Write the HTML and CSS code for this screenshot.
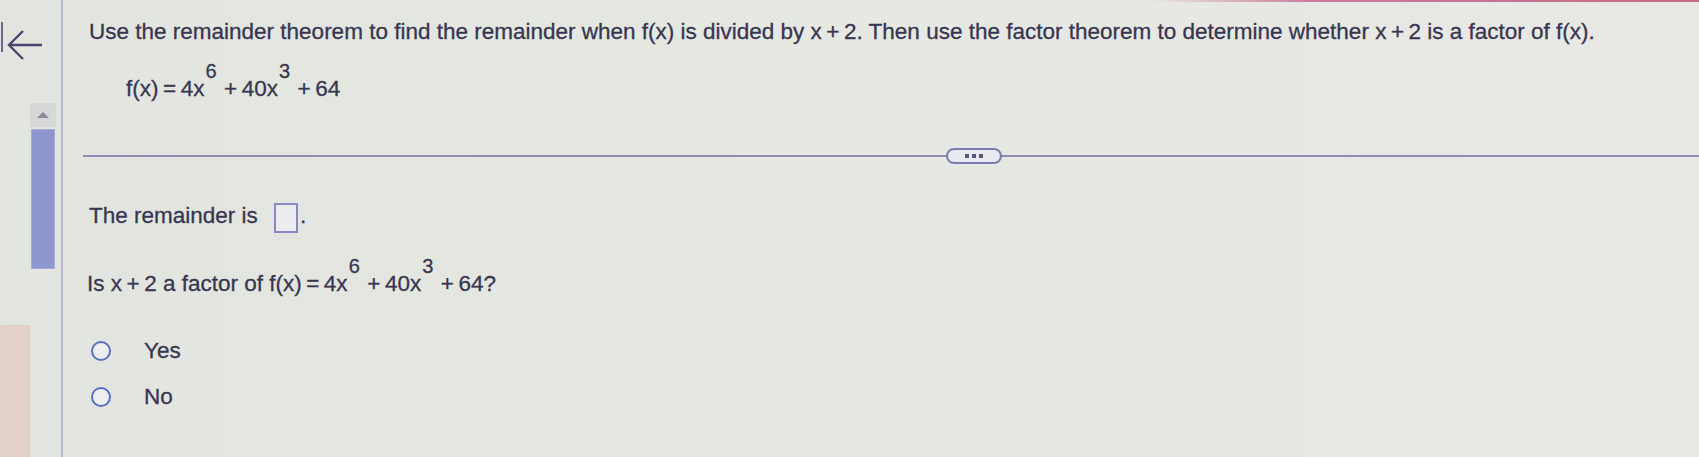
FILE: index.html
```html
<!DOCTYPE html>
<html>
<head>
<meta charset="utf-8">
<link rel="stylesheet" href="styles.css">
</head>
<body>
<div class="topline"></div>
<div class="page">
  <aside class="side">
    <div class="back">
      <span class="edge"></span>
      <svg width="40" height="34" viewBox="0 0 40 34"><path d="M38 17H5M19 3L5 17L19 31" fill="none" stroke="#4a4670" stroke-width="2.4"/></svg>
    </div>
    <div class="scroll">
      <div class="scroll-up"><span class="tri"></span></div>
      <div class="thumb"></div>
    </div>
    <div class="pink"></div>
  </aside>
  <main class="main">
    <p class="q">Use the remainder theorem to find the remainder when f(x) is divided by x&thinsp;+&thinsp;2. Then use the factor theorem to determine whether x&thinsp;+&thinsp;2 is a factor of f(x).</p>
    <p class="formula">f(x)&thinsp;=&thinsp;4x<sup>6</sup>&thinsp;+&thinsp;40x<sup>3</sup>&thinsp;+&thinsp;64</p>
    <div class="divider"><span class="pill"><i></i><i></i><i></i></span></div>
    <p class="rem">The remainder is <span class="box"></span>.</p>
    <p class="is">Is x&thinsp;+&thinsp;2 a factor of f(x)&thinsp;=&thinsp;4x<sup>6</sup>&thinsp;+&thinsp;40x<sup>3</sup>&thinsp;+&thinsp;64?</p>
    <div class="opts">
      <label class="opt"><span class="radio"></span>Yes</label>
      <label class="opt"><span class="radio"></span>No</label>
    </div>
  </main>
</div>
</body>
</html>
```
FILE: styles.css
```css
html, body { margin: 0; padding: 0; }
body {
  width: 1699px; height: 457px; overflow: hidden; position: relative;
  background: linear-gradient(90deg, #e2e5df 0%, #e6e8e2 50%, #e8e8e4 100%);
  font-family: "Liberation Sans", Arial, sans-serif;
  color: #383650;
  -webkit-text-stroke: 0.3px #383650;
}
.topline { position: absolute; left: 1150px; top: 0; width: 549px; height: 2px; background: linear-gradient(90deg, rgba(200,110,150,0), #c97a9a 30%, #c46a8a); }
.page { display: flex; height: 457px; }
.side {
  width: 61px; flex: none; position: relative;
  border-right: 2px solid #b6b8cf;
  display: flex; flex-direction: column;
}
.back { padding: 28px 0 0 4px; height: 103px; box-sizing: border-box; position: relative; }
.back svg { display: block; }
.edge { position: absolute; left: 1px; top: 22px; width: 2px; height: 30px; background: #6a6890; }
.scroll {
  margin-left: 30px; width: 26px;
  display: flex; flex-direction: column; align-items: center;
}
.scroll-up {
  width: 26px; height: 24px; background: #d6d8d8;
  display: flex; align-items: center; justify-content: center;
}
.tri { width: 0; height: 0; border-left: 6px solid transparent; border-right: 6px solid transparent; border-bottom: 6px solid #8a8c9c; }
.thumb { width: 22px; height: 138px; margin-top: 2px; background: #8e96cf; border: 1px solid #a6acd6; }
.pink { position: absolute; left: 0; top: 325px; width: 30px; height: 132px; background: #e3cfc9; }
.main { flex: 1; position: relative; }
p { margin: 0; }
.q { font-size: 22.5px; padding: 19px 0 0 26px; line-height: 26px; white-space: nowrap; }
.formula { font-size: 22.5px; padding: 26px 0 0 63px; line-height: 26px; }
sup { font-size: 20px; vertical-align: 18px; line-height: 0; margin: 0 3px 0 1px; }
.divider {
  margin: 53px 0 0 20px; height: 2px; background: #8f8cb6;
  position: relative;
}
.pill {
  position: absolute; left: 863px; top: -7px; width: 52px; height: 12px;
  border: 2px solid #7d7bb0; border-radius: 8px; background: #e8eaf0;
  display: flex; align-items: center; justify-content: center; gap: 3px;
}
.pill i { width: 4px; height: 4px; background: #56557a; display: block; }
.rem { font-size: 22.5px; padding: 46px 0 0 26px; line-height: 26px; }
.box { display: inline-block; width: 20px; height: 26px; border: 2px solid #8c88c8; margin: 0 2px 0 10px; background: #eaecef; vertical-align: -10px; }
.is { font-size: 22.5px; padding: 33px 0 0 24px; line-height: 26px; }
.opts { padding: 41px 0 0 28px; display: flex; flex-direction: column; gap: 20px; }
.opt { display: flex; align-items: center; font-size: 22.5px; line-height: 26px; }
.radio { width: 16px; height: 16px; border: 2.5px solid #5b70c4; border-radius: 50%; margin-right: 33px; background: #eceef0; -webkit-text-stroke: 0; }
```
